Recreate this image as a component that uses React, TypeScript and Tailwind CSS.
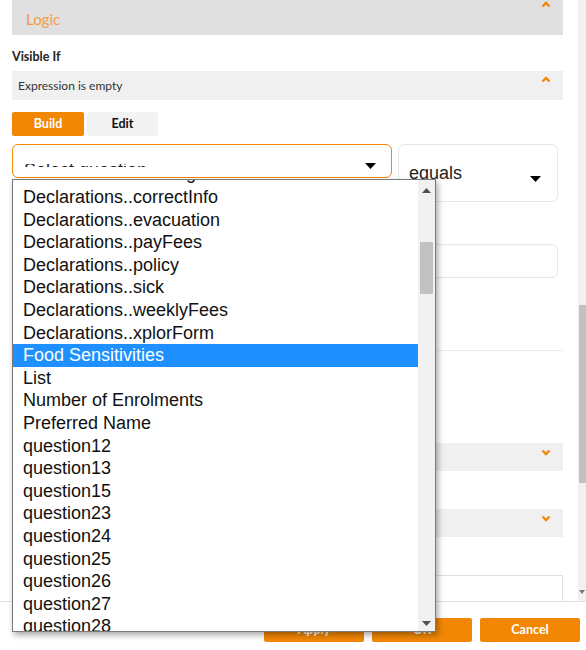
import React from 'react';

const items = [
  'Declarations..booking',
  'Declarations..correctInfo',
  'Declarations..evacuation',
  'Declarations..payFees',
  'Declarations..policy',
  'Declarations..sick',
  'Declarations..weeklyFees',
  'Declarations..xplorForm',
  'Food Sensitivities',
  'List',
  'Number of Enrolments',
  'Preferred Name',
  'question12',
  'question13',
  'question15',
  'question23',
  'question24',
  'question25',
  'question26',
  'question27',
  'question28',
  'question29',
];

const Chevron = ({ up }: { up?: boolean }) => (
  <svg width="10" height="7" viewBox="0 0 10 7" className="block">
    <polyline
      points={up ? '1.5,5.5 5,2 8.5,5.5' : '1.5,1.5 5,5 8.5,1.5'}
      fill="none"
      stroke="#f28705"
      strokeWidth="2.4"
    />
  </svg>
);

const Caret = () => (
  <svg width="11" height="6" viewBox="0 0 11 6" className="block">
    <polygon points="0,0 11,0 5.5,6" fill="#000" />
  </svg>
);

const Arrow = ({ up }: { up?: boolean }) => (
  <svg width="9" height="5" viewBox="0 0 9 5" className="block">
    <polygon points={up ? '0,5 9,5 4.5,0' : '0,0 9,0 4.5,5'} fill="#505050" />
  </svg>
);

const App: React.FC = () => {
  return (
    <div className="relative w-[586px] h-[650px] overflow-hidden bg-white font-['Lato','Open_Sans',sans-serif]">
      {/* scrolling page */}
      <div className="flex h-[601px]">
        <div className="flex-1 overflow-hidden pl-3 pr-[15px]">
          {/* Logic header */}
          <div className="flex h-[35px] items-start justify-between bg-[#e0e0e0] pl-[14px] pr-[12px]">
            <span className="mt-[9px] text-[15px] leading-[20px] text-[#f39a4c]">Logic</span>
            <div className="mt-[1px]">
              <Chevron up />
            </div>
          </div>

          <div className="mt-[14px] text-[12.5px] font-bold leading-[16px] text-[#222]">Visible If</div>

          {/* Expression bar */}
          <div className="mt-[6px] flex h-[29px] items-start justify-between bg-[#f0f0f0] pl-[6px] pr-[12px]">
            <span className="mt-[7px] text-[12px] leading-[16px] text-[#333]">Expression is empty</span>
            <div className="mt-[5px]">
              <Chevron up />
            </div>
          </div>

          {/* Build / Edit */}
          <div className="mt-[12px] flex gap-[3px]">
            <button className="h-[24px] w-[72px] rounded-[2px] bg-[#f28705] text-[12.5px] font-bold text-white">
              Build
            </button>
            <button className="h-[24px] w-[71px] rounded-[2px] bg-[#f3f3f3] text-[12.5px] font-bold text-[#111]">
              Edit
            </button>
          </div>

          {/* condition row */}
          <div className="mt-[8px] grid grid-cols-[380px_160px] gap-x-[6px]">
            <div>
              <div className="flex h-[34px] items-start justify-between rounded-[6px] border border-[#f28705] pl-[11px] pr-[15px]">
                <div className="mt-[19px] h-[3px] overflow-hidden">
                  <span className="block font-['Liberation_Sans',Arial,sans-serif] text-[18px] leading-[20px] text-[#222] -mt-[4px]">
                    Select question...
                  </span>
                </div>
                <div className="mt-[18px]">
                  <Caret />
                </div>
              </div>
            </div>
            <div>
              <div className="flex h-[58px] items-start justify-between rounded-[6px] border border-[#e6e6e6] pl-[10px] pr-[16px]">
                <span className="mt-[18px] font-['Liberation_Sans',Arial,sans-serif] text-[18px] leading-[20px] text-[#222]">
                  equals
                </span>
                <div className="mt-[31px]">
                  <Caret />
                </div>
              </div>
              <div className="mt-[42px] h-[34px] rounded-[6px] border border-[#e6e6e6]" />
            </div>
          </div>

          <div className="mt-[72px] h-[1px] bg-[#ececec]" />

          <div className="mt-[92px] flex h-[28px] items-start justify-end bg-[#f0f0f0] pr-[12px]">
            <div className="mt-[6px]">
              <Chevron />
            </div>
          </div>

          <div className="mt-[38px] flex h-[28px] items-start justify-end bg-[#f0f0f0] pr-[12px]">
            <div className="mt-[6px]">
              <Chevron />
            </div>
          </div>

          <div className="mt-[38px] h-[40px] border border-[#e0e0e0]" />
        </div>

        {/* page scrollbar */}
        <div className="relative w-[8px] bg-[#f1f1f1]">
          <div className="absolute left-[1px] top-[305px] h-[178px] w-[7px] bg-[#c1c1c1]" />
          <div className="absolute left-[1px] top-[590px]">
            <svg width="6" height="4" viewBox="0 0 6 4" className="block">
              <polygon points="0,0 6,0 3,4" fill="#777" />
            </svg>
          </div>
        </div>
      </div>

      {/* footer */}
      <div className="flex h-[49px] justify-end gap-2 border-t border-[#e0e0e0] pr-[6px] pt-[16px]">
        <button className="h-[24px] w-[100px] rounded-[2px] bg-[#f28705] text-[12.5px] font-bold text-white">Apply</button>
        <button className="h-[24px] w-[100px] rounded-[2px] bg-[#f28705] text-[12.5px] font-bold text-white">OK</button>
        <button className="h-[24px] w-[100px] rounded-[2px] bg-[#f28705] text-[12.5px] font-bold text-white">Cancel</button>
      </div>

      {/* open select popup */}
      <div className="absolute left-[12px] top-[179px] flex h-[453px] w-[424px] border border-[#7a7a7a] bg-white shadow-[2px_3px_6px_rgba(0,0,0,0.35)]">
        <div className="w-[405px] overflow-hidden">
          <div className="-mt-[16.5px]">
            {items.map((item, i) => (
              <div
                key={item}
                className={`h-[22.6px] pl-[10px] font-['Liberation_Sans',Arial,sans-serif] text-[18px] ${
                  i === 0 ? 'leading-[19px]' : 'leading-[22.6px]'
                } ${item === 'Food Sensitivities' ? 'bg-[#1e90ff] text-white' : 'text-[#111]'}`}
              >
                {item}
              </div>
            ))}
          </div>
        </div>
        <div className="relative w-[17px] bg-[#f1f1f1]">
          <div className="absolute left-[4px] top-[8px]">
            <Arrow up />
          </div>
          <div className="absolute left-[2px] top-[62px] h-[52px] w-[13px] bg-[#c1c1c1]" />
          <div className="absolute left-[4px] top-[441px]">
            <Arrow />
          </div>
        </div>
      </div>
    </div>
  );
};

export default App;
